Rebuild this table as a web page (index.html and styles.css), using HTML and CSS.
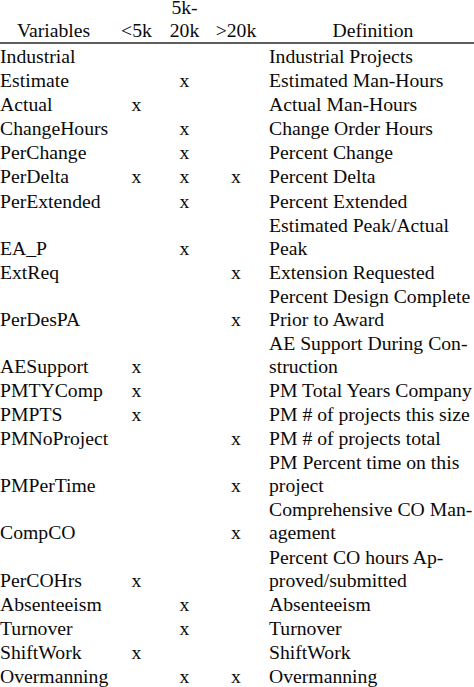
FILE: index.html
```
<!DOCTYPE html>
<html>
<head>
<meta charset="utf-8">
<link rel="stylesheet" href="styles.css">
</head>
<body>
<table class="vars">
  <colgroup>
    <col class="c-var"><col class="c-a"><col class="c-b"><col class="c-c"><col class="c-def">
  </colgroup>
  <thead>
    <tr>
      <th>Variables</th><th>&lt;5k</th><th>5k-<br>20k</th><th>&gt;20k</th><th>Definition</th>
    </tr>
  </thead>
  <tbody>
    <tr><td>Industrial</td><td></td><td></td><td></td><td>Industrial Projects</td></tr>
    <tr><td>Estimate</td><td></td><td>x</td><td></td><td>Estimated Man-Hours</td></tr>
    <tr><td>Actual</td><td>x</td><td></td><td></td><td>Actual Man-Hours</td></tr>
    <tr><td>ChangeHours</td><td></td><td>x</td><td></td><td>Change Order Hours</td></tr>
    <tr><td>PerChange</td><td></td><td>x</td><td></td><td>Percent Change</td></tr>
    <tr><td>PerDelta</td><td>x</td><td>x</td><td>x</td><td>Percent Delta</td></tr>
    <tr><td>PerExtended</td><td></td><td>x</td><td></td><td>Percent Extended</td></tr>
    <tr><td>EA_P</td><td></td><td>x</td><td></td><td>Estimated Peak/Actual<br>Peak</td></tr>
    <tr><td>ExtReq</td><td></td><td></td><td>x</td><td>Extension Requested</td></tr>
    <tr><td>PerDesPA</td><td></td><td></td><td>x</td><td>Percent Design Complete<br>Prior to Award</td></tr>
    <tr><td>AESupport</td><td>x</td><td></td><td></td><td>AE Support During Con-<br>struction</td></tr>
    <tr><td>PMTYComp</td><td>x</td><td></td><td></td><td>PM Total Years Company</td></tr>
    <tr><td>PMPTS</td><td>x</td><td></td><td></td><td>PM # of projects this size</td></tr>
    <tr><td>PMNoProject</td><td></td><td></td><td>x</td><td>PM # of projects total</td></tr>
    <tr><td>PMPerTime</td><td></td><td></td><td>x</td><td>PM Percent time on this<br>project</td></tr>
    <tr><td>CompCO</td><td></td><td></td><td>x</td><td>Comprehensive CO Man-<br>agement</td></tr>
    <tr><td>PerCOHrs</td><td>x</td><td></td><td></td><td>Percent CO hours Ap-<br>proved/submitted</td></tr>
    <tr><td>Absenteeism</td><td></td><td>x</td><td></td><td>Absenteeism</td></tr>
    <tr><td>Turnover</td><td></td><td>x</td><td></td><td>Turnover</td></tr>
    <tr><td>ShiftWork</td><td>x</td><td></td><td></td><td>ShiftWork</td></tr>
    <tr><td>Overmanning</td><td></td><td>x</td><td>x</td><td>Overmanning</td></tr>
  </tbody>
</table>
</body>
</html>
```
FILE: styles.css
```
html, body {
  margin: 0;
  padding: 0;
  background: #ffffff;
  overflow: hidden;
}
.vars {
  font-family: "Times New Roman", "Liberation Serif", "DejaVu Serif", serif;
  font-size: 19.7px;
  line-height: 23px;
  color: #0a0a0a;
  border-collapse: collapse;
  table-layout: fixed;
  width: 477px;
  margin-top: -4px;
}
.c-var { width: 107px; }
.c-a { width: 59px; }
.c-b { width: 37px; }
.c-c { width: 66px; }
.c-def { width: 208px; }
.vars th {
  font-weight: normal;
  text-align: center;
  vertical-align: bottom;
  padding: 0;
  white-space: nowrap;
  border-bottom: 2px solid #5e5e5e;
}
.vars td {
  padding: 0.55px 0;
  vertical-align: bottom;
  white-space: nowrap;
  text-align: center;
}
.vars td:first-child,
.vars td:last-child {
  text-align: left;
}
.vars tbody tr:first-child td {
  padding-top: 1px;
}
```
